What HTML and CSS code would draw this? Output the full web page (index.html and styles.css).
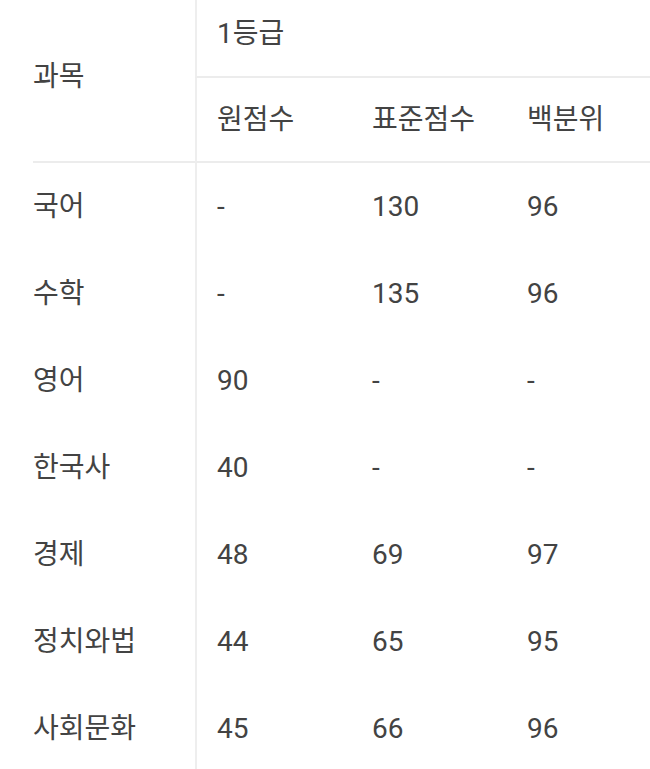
FILE: index.html
```html
<!DOCTYPE html>
<html lang="ko">
<head>
<meta charset="utf-8">
<link rel="stylesheet" href="styles.css">
</head>
<body>
<div class="wrap">
<table class="grade">
  <colgroup>
    <col class="c-subject"><col class="c-num"><col class="c-num"><col class="c-last">
  </colgroup>
  <thead>
    <tr class="h1">
      <th rowspan="2" class="subj-head">과목</th>
      <th colspan="3" class="grade-head sep">1등급</th>
    </tr>
    <tr class="h2">
      <th class="sep">원점수</th>
      <th>표준점수</th>
      <th>백분위</th>
    </tr>
  </thead>
  <tbody>
    <tr><td>국어</td><td class="sep">-</td><td>130</td><td>96</td></tr>
    <tr><td>수학</td><td class="sep">-</td><td>135</td><td>96</td></tr>
    <tr><td>영어</td><td class="sep">90</td><td>-</td><td>-</td></tr>
    <tr><td>한국사</td><td class="sep">40</td><td>-</td><td>-</td></tr>
    <tr><td>경제</td><td class="sep">48</td><td>69</td><td>97</td></tr>
    <tr><td>정치와법</td><td class="sep">44</td><td>65</td><td>95</td></tr>
    <tr><td>사회문화</td><td class="sep">45</td><td>66</td><td>96</td></tr>
  </tbody>
</table>
</div>
</body>
</html>
```
FILE: styles.css
```css
html, body {
  margin: 0;
  padding: 0;
  background: #fff;
}
body {
  width: 650px;
  height: 769px;
  overflow: hidden;
  font-family: Roboto, "Noto Sans CJK KR", sans-serif;
  color: #434343;
}
.wrap {
  margin-top: -9px;
  padding-left: 33px;
}
.grade {
  border-collapse: separate;
  border-spacing: 0;
  width: 617px;
  table-layout: fixed;
  font-size: 28px;
}
.c-subject { width: 162px; }
.c-num { width: 155px; }
.c-last { width: 145px; }
.grade th,
.grade td {
  padding: 0;
  text-align: left;
  font-weight: 400;
  vertical-align: middle;
  white-space: nowrap;
}
.grade th + th,
.grade td + td {
  padding-left: 22px;
}
.grade .sep {
  border-left: 2px solid #eeeeee;
  padding-left: 20px;
}
.h1 th {
  height: 85px;
  line-height: 85px;
}
.subj-head {
  border-bottom: 2px solid #ececec;
}
.grade-head {
  border-bottom: 2px solid #ececec;
}
.h2 th {
  height: 83px;
  line-height: 83px;
  border-bottom: 2px solid #ececec;
}
.grade tbody td {
  height: 87px;
  line-height: 87px;
}
```
